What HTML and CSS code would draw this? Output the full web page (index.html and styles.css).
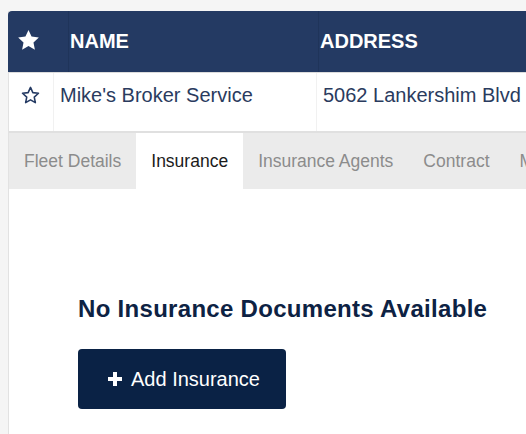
FILE: index.html
```html
<!DOCTYPE html>
<html>
    <head>
        <meta charset="UTF-8">
        <meta name="viewport" content="width=device-width, initial-scale=1.0">
        <title>Broker Details</title>
        <link rel="stylesheet" href="styles.css">
    </head>
    <body>
        <div class="panel">
            <div class="table-head">
                <div class="head-cell star-cell">
                    <svg width="23" height="22" viewBox="0 0 24 23"><polygon points="12,1 15.2,7.9 22.8,8.8 17.2,14 18.7,21.6 12,17.8 5.3,21.6 6.8,14 1.2,8.8 8.8,7.9" fill="#fff"/></svg>
                </div>
                <div class="head-cell">NAME</div>
                <div class="head-cell">ADDRESS</div>
            </div>
            <div class="table-row">
                <div class="row-cell star-cell">
                    <svg width="19" height="18" viewBox="0 0 24 23"><polygon points="12,1.8 15,8.5 22.2,9.3 16.8,14.2 18.2,21.3 12,17.7 5.8,21.3 7.2,14.2 1.8,9.3 9,8.5" fill="none" stroke="#243a63" stroke-width="2" stroke-linejoin="round"/></svg>
                </div>
                <div class="row-cell">Mike's Broker Service</div>
                <div class="row-cell">5062 Lankershim Blvd</div>
            </div>
            <div class="tabs">
                <div class="tab">Fleet Details</div>
                <div class="tab active">Insurance</div>
                <div class="tab">Insurance Agents</div>
                <div class="tab">Contract</div>
                <div class="tab">Maintenance</div>
            </div>
            <div class="tab-content">
                <h2 class="empty-title">No Insurance Documents Available</h2>
                <button class="add-button">
                    <svg width="14" height="14" viewBox="0 0 14 14"><rect x="5" y="0" width="4" height="14" fill="#fff"/><rect x="0" y="5" width="14" height="4" fill="#fff"/></svg>
                    Add Insurance
                </button>
            </div>
        </div>
    </body>
</html>
```

FILE: styles.css
```css
* {
    margin: 0;
    padding: 0;
    box-sizing: border-box;
}
body {
    font-family: "Liberation Sans", Arial, sans-serif;
    background-color: #f5f5f5;
    overflow: hidden;
}
.panel {
    margin-top: 11px;
    margin-left: 8px;
    width: 900px;
    min-height: 440px;
    background-color: #fff;
    border-left: 1px solid #e2e2e2;
}
.table-head {
    display: grid;
    grid-template-columns: 60px 250px 1fr;
    height: 62px;
    margin-left: -1px;
    background-color: #243a63;
    border-top-left-radius: 4px;
    border-bottom: 1px solid #dcdcdc;
}
.head-cell {
    display: flex;
    align-items: center;
    padding-left: 1px;
    color: #fff;
    font-size: 20px;
    font-weight: bold;
    border-left: 1px solid #1f345a;
}
.head-cell.star-cell {
    border-left: none;
    padding-left: 9px;
    padding-bottom: 3px;
}
.table-row {
    display: grid;
    grid-template-columns: 44px 263px 1fr;
    height: 60px;
    border-bottom: 2px solid #e0e0e0;
}
.row-cell {
    padding: 7px 0 0 6px;
    font-size: 20px;
    line-height: 30px;
    color: #2a3b5e;
    border-left: 1px solid #f1f1f1;
}
.row-cell.star-cell {
    border-left: none;
    padding: 13px 0 0 12px;
    line-height: 0;
}
.tabs {
    display: flex;
    height: 56px;
    background-color: #ebebeb;
}
.tab {
    display: flex;
    align-items: center;
    padding: 0 15px;
    font-size: 17.5px;
    color: #8c8c8c;
    white-space: nowrap;
}
.tab.active {
    background-color: #fff;
    color: #1b1b1b;
}
.tab-content {
    padding: 106px 0 0 69px;
}
.empty-title {
    font-size: 24px;
    line-height: 28px;
    letter-spacing: 0.3px;
    color: #0d2243;
}
.add-button {
    display: inline-flex;
    align-items: center;
    gap: 9px;
    margin-top: 26px;
    height: 60px;
    padding: 0 26px 0 30px;
    border: none;
    border-radius: 4px;
    background-color: #0a2245;
    color: #fff;
    font-family: "Liberation Sans", Arial, sans-serif;
    font-size: 20px;
}
```
